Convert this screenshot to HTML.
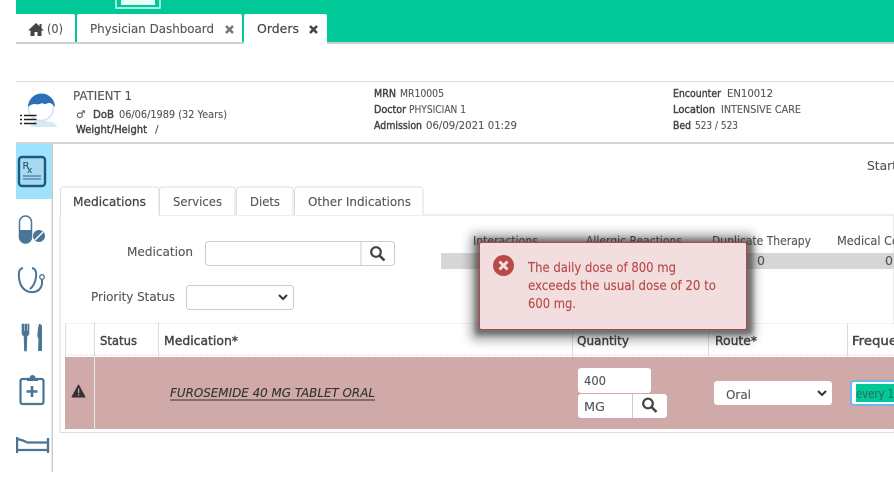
<!DOCTYPE html>
<html><head><meta charset="utf-8"><style>
html,body{margin:0;padding:0;background:#fff;width:894px;height:495px;overflow:hidden}
svg{display:block;filter:blur(.35px)}
text{font-family:"DejaVu Sans","Liberation Sans",sans-serif;font-size:12.5px;fill:#555;stroke:#555;stroke-width:.12}
.b{fill:#444;stroke:#444;stroke-width:.45}
.s{font-size:10.5px}
.h{fill:#444;stroke:#444;stroke-width:.4;font-size:12.5px}
.e{fill:#b94a48;stroke:#b94a48;stroke-width:.15;font-size:13px}
</style></head><body>
<svg width="894" height="495" viewBox="0 0 894 495" xmlns="http://www.w3.org/2000/svg">
<defs><filter id="sh" x="-20%" y="-30%" width="140%" height="160%"><feGaussianBlur stdDeviation="5"/></filter><filter id="sh2" x="-20%" y="-30%" width="140%" height="160%"><feGaussianBlur stdDeviation="2.500"/></filter></defs>
<rect width="894" height="495" fill="#fff"/>
<!-- top bar -->
<rect x="16" y="0" width="878" height="42" fill="#00c896"/>
<rect x="116" y="-3" width="44" height="11" fill="#00c896" stroke="#e8fff8" stroke-width="1.400"/>
<rect x="121" y="0" width="34" height="5" fill="#e8fff8"/>
<rect x="16" y="42" width="878" height="2" fill="#d0d0d0"/>
<!-- tabs -->
<path d="M16 14H73a2 2 0 0 1 2 2V42H16Z" fill="#fff"/>
<path d="M77 16a2 2 0 0 1 2-2H240a2 2 0 0 1 2 2V42H77Z" fill="#fff"/>
<path d="M244 16a2 2 0 0 1 2-2H325a2 2 0 0 1 2 2V42H244Z" fill="#fff"/>
<rect x="244" y="42" width="83" height="2" fill="#fff"/>
<path d="M36 23l-8 7.500h2.500V36h4v-4h3v4h4v-5.500H44l-2.500-2.300V24h-2v2.300Z" fill="#444"/>
<text x="47" y="33" textLength="16" lengthAdjust="spacingAndGlyphs">(0)</text>
<text x="90" y="33" textLength="124" lengthAdjust="spacingAndGlyphs">Physician Dashboard</text>
<path d="M226 26l7 7m0-7l-7 7" stroke="#777" stroke-width="2.600"/>
<text x="257" y="33" class="h" style="stroke-width:.15" textLength="42" lengthAdjust="spacingAndGlyphs">Orders</text>
<path d="M310 26l7 7m0-7l-7 7" stroke="#444" stroke-width="2.600"/>
<!-- patient header -->
<rect x="16" y="81" width="878" height="1" fill="#ddd"/>
<rect x="16" y="142" width="878" height="2" fill="#d4d4d4"/>
<path d="M31 127q0-5 6-6h9q10 1 11 6Z" fill="#d5e8f6"/>
<circle cx="41" cy="108" r="12.500" fill="#fff" stroke="#cfe3f3" stroke-width="1.500"/>
<path d="M28 107a13 13 0 0 1 27 0q-4-5-7-4q-3 2-6 0q-3 2-7 1q-4 0-7 3Z" fill="#2a6fb8"/>
<path d="M24 115.500h12.500M24 119.500h12.500M24 123.500h12.500M20 115.500h2M20 119.500h2M20 123.500h2" stroke="#222" stroke-width="1.600"/>
<text x="73" y="100" textLength="59" lengthAdjust="spacingAndGlyphs">PATIENT 1</text>
<text x="76" y="118" class="s">♂</text>
<text x="93" y="118" class="s b" textLength="21" lengthAdjust="spacingAndGlyphs">DoB</text>
<text x="119" y="118" class="s" textLength="108" lengthAdjust="spacingAndGlyphs">06/06/1989 (32 Years)</text>
<text x="76" y="133" class="s b" textLength="71" lengthAdjust="spacingAndGlyphs">Weight/Height</text>
<text x="155" y="133" class="s">/</text>
<text x="374" y="97" class="s b" textLength="22" lengthAdjust="spacingAndGlyphs">MRN</text>
<text x="400" y="97" class="s" textLength="44" lengthAdjust="spacingAndGlyphs">MR10005</text>
<text x="374" y="113" class="s b" textLength="32" lengthAdjust="spacingAndGlyphs">Doctor</text>
<text x="409" y="113" class="s" textLength="57" lengthAdjust="spacingAndGlyphs">PHYSICIAN 1</text>
<text x="374" y="129" class="s b" textLength="48" lengthAdjust="spacingAndGlyphs">Admission</text>
<text x="426" y="129" class="s" textLength="91" lengthAdjust="spacingAndGlyphs">06/09/2021 01:29</text>
<text x="673" y="97" class="s b" textLength="48" lengthAdjust="spacingAndGlyphs">Encounter</text>
<text x="727" y="97" class="s" textLength="46" lengthAdjust="spacingAndGlyphs">EN10012</text>
<text x="673" y="113" class="s b" textLength="42" lengthAdjust="spacingAndGlyphs">Location</text>
<text x="721" y="113" class="s" textLength="80" lengthAdjust="spacingAndGlyphs">INTENSIVE CARE</text>
<text x="673" y="129" class="s b" textLength="18" lengthAdjust="spacingAndGlyphs">Bed</text>
<text x="695" y="129" class="s" textLength="43" lengthAdjust="spacingAndGlyphs">523 / 523</text>
<text x="867" y="170" textLength="30" lengthAdjust="spacingAndGlyphs">Start</text>
<!-- sidebar -->
<rect x="16" y="144" width="36" height="55" fill="#9fe2fd"/>
<rect x="51.500" y="144" width="1.500" height="328" fill="#ccc"/>
<rect x="19" y="157" width="26" height="29" rx="3" fill="#a9d9ee" stroke="#1a5a80" stroke-width="2.400"/>
<text x="22.500" y="169" style="font-size:10px;fill:#1a5a80;stroke:#1a5a80">R</text>
<text x="27" y="173" style="font-size:9px;fill:#1a5a80;stroke:#1a5a80">x</text>
<path d="M23 176h18M23 179h18" stroke="#3f7fa8" stroke-width="1.200"/>
<!-- pill -->
<rect x="19.500" y="216" width="12" height="27" rx="6" fill="#fff" stroke="#4a7595" stroke-width="1.500"/>
<path d="M19 230h13v7a6.500 6.500 0 0 1-13 0Z" fill="#4a7595"/>
<circle cx="39" cy="236" r="6" fill="#4a7595"/>
<path d="M35 240l8-8" stroke="#fff" stroke-width="1.400"/>
<!-- stethoscope -->
<path d="M23 268q-5 1-4 9q1 13 11 15q10 1 12-8v-7M32 268q5 1 4 9q-1 8-6 12" fill="none" stroke="#4a7595" stroke-width="2"/>
<circle cx="42" cy="277" r="2.300" fill="#fff" stroke="#4a7595" stroke-width="1.300"/>
<!-- cutlery -->
<path d="M22 324v9q0 2 2 3l.5 15h2l.5-15q2-1 2-3v-9h-1.200v7h-1.100v-7h-1.400v7h-1.100v-7Z" fill="#4a7595" stroke="#4a7595" stroke-width=".6"/>
<path d="M39 324q3-.5 3 3v24h-4l.5-12q-1.500-2-1-6q.5-6 1.500-9Z" fill="#4a7595"/>
<!-- clipboard -->
<rect x="20.500" y="379" width="23" height="25" rx="2" fill="#fff" stroke="#4a7595" stroke-width="2.200"/>
<path d="M27 381v-3h2.500q.5-3 3-3t3 3H38v3Z" fill="#4a7595"/>
<path d="M32 386v11M26.500 391.500h11" stroke="#4a7595" stroke-width="2.600"/>
<!-- bed -->
<path d="M17 437v16M48 438v15" stroke="#4a7595" stroke-width="2.400"/>
<path d="M17 439q6 1 10 3.500h21M17 450h31" fill="none" stroke="#4a7595" stroke-width="2.200"/>
<!-- main tabs -->
<rect x="60" y="215" width="834" height="217.500" fill="#fff" stroke="#ddd"/>
<path d="M60.500 215V190a3 3 0 0 1 3-3H156a3 3 0 0 1 3 3V215" fill="#fff" stroke="#ddd"/>
<rect x="61" y="213" width="97.500" height="4" fill="#fff"/>
<path d="M159.500 215V190a3 3 0 0 1 3-3H232a3 3 0 0 1 3 3V215M236.500 215V190a3 3 0 0 1 3-3H290a3 3 0 0 1 3 3V215M294.500 215V190a3 3 0 0 1 3-3H420a3 3 0 0 1 3 3V215" fill="#fff" stroke="#ddd"/>
<text x="73" y="206" class="h" style="stroke-width:.25" textLength="73" lengthAdjust="spacingAndGlyphs">Medications</text>
<text x="173" y="206" textLength="49" lengthAdjust="spacingAndGlyphs">Services</text>
<text x="250" y="206" textLength="30" lengthAdjust="spacingAndGlyphs">Diets</text>
<text x="308" y="206" textLength="103" lengthAdjust="spacingAndGlyphs">Other Indications</text>
<!-- form -->
<text x="127" y="256" textLength="66" lengthAdjust="spacingAndGlyphs">Medication</text>
<rect x="205.500" y="241.500" width="189" height="24" rx="3" fill="#fff" stroke="#ccc"/>
<path d="M361 241v25" stroke="#ccc"/>
<circle cx="376" cy="252" r="4.800" fill="none" stroke="#444" stroke-width="2.200"/>
<path d="M379.500 255.500l5 5" stroke="#444" stroke-width="2.600"/>
<text x="91" y="301" textLength="84" lengthAdjust="spacingAndGlyphs">Priority Status</text>
<rect x="186.500" y="285.500" width="107" height="24" rx="3" fill="#fff" stroke="#ccc"/>
<path d="M279 295l4 4 4-4" fill="none" stroke="#333" stroke-width="2"/>
<!-- columns -->
<text x="473" y="245" textLength="65" lengthAdjust="spacingAndGlyphs">Interactions</text>
<text x="586" y="245" textLength="96" lengthAdjust="spacingAndGlyphs">Allergic Reactions</text>
<text x="712" y="245" textLength="99" lengthAdjust="spacingAndGlyphs">Duplicate Therapy</text>
<text x="837" y="245" textLength="62" lengthAdjust="spacingAndGlyphs">Medical Co</text>
<rect x="441" y="253" width="453" height="16" fill="#d6d6d6"/>
<text x="757" y="265">0</text>
<text x="885" y="265">0</text>
<!-- table -->
<rect x="65" y="323" width="829" height="34" fill="#fff"/>
<path d="M65 323.500H894" stroke="#e3e3e3" stroke-dasharray="1 1"/>
<path d="M65.500 323V430M94.500 323V430M158.500 323V357M572.500 323V357M708.500 323V357M847.500 323V357" stroke="#ddd"/>
<path d="M65 355H894" stroke="#ddd" stroke-dasharray="2 1"/>
<text x="100" y="345" class="h" textLength="37" lengthAdjust="spacingAndGlyphs">Status</text>
<text x="164" y="345" class="h" textLength="74" lengthAdjust="spacingAndGlyphs">Medication*</text>
<text x="577" y="345" class="h" textLength="52" lengthAdjust="spacingAndGlyphs">Quantity</text>
<text x="715" y="345" class="h" textLength="42" lengthAdjust="spacingAndGlyphs">Route*</text>
<text x="852" y="345" class="h" textLength="45" lengthAdjust="spacingAndGlyphs">Freque</text>
<rect x="65" y="357" width="829" height="72" fill="#cfaaa8"/>
<path d="M94.500 357V429" stroke="#dfe8ea"/>
<path d="M78.500 385l6.500 12H72Z" fill="#333" stroke="#333" stroke-linejoin="round"/>
<rect x="78" y="388.500" width="1.200" height="4.500" fill="#cfaaa8"/>
<rect x="78" y="394" width="1.200" height="1.400" fill="#cfaaa8"/>
<text x="170" y="397" style="font-style:italic;fill:#333;stroke:#333" textLength="205" lengthAdjust="spacingAndGlyphs">FUROSEMIDE 40 MG TABLET ORAL</text>
<path d="M170 400H375" stroke="#333"/>
<rect x="578" y="368" width="73" height="25" rx="3" fill="#fff"/>
<rect x="578" y="394" width="89" height="24" rx="3" fill="#fff"/>
<path d="M632.500 394v24" stroke="#ccc"/>
<text x="584" y="385" textLength="22" lengthAdjust="spacingAndGlyphs">400</text>
<text x="584" y="411" textLength="21" lengthAdjust="spacingAndGlyphs">MG</text>
<circle cx="648" cy="403.500" r="4.800" fill="none" stroke="#444" stroke-width="2.200"/>
<path d="M651.500 407l5 5" stroke="#444" stroke-width="2.600"/>
<rect x="714" y="381" width="118" height="24" rx="3" fill="#fff"/>
<text x="726" y="399" textLength="25" lengthAdjust="spacingAndGlyphs">Oral</text>
<path d="M818 391l4 4 4-4" fill="none" stroke="#333" stroke-width="2"/>
<rect x="851" y="381" width="50" height="24" rx="3" fill="#fff" stroke="#6ab8ee" stroke-width="2"/>
<rect x="856" y="384" width="40" height="18" fill="#00c896"/>
<text x="856" y="398" style="fill:#2f6f5c;stroke:#2f6f5c" textLength="38" lengthAdjust="spacingAndGlyphs">every 1</text>
<!-- modal -->
<rect x="470" y="233" width="285" height="108" rx="6" fill="#000" opacity=".3" filter="url(#sh)"/>
<rect x="475" y="239" width="278" height="96" rx="3" fill="#444" opacity=".6" filter="url(#sh2)"/>
<rect x="479.500" y="242.500" width="267" height="87" rx="2" fill="#f2dede" stroke="#b0484a"/>
<circle cx="503.500" cy="265.500" r="10.500" fill="#b94a48"/>
<path d="M499.500 261.500l8 8m0-8l-8 8" stroke="#f2dede" stroke-width="3"/>
<text x="528" y="272" class="e" textLength="148" lengthAdjust="spacingAndGlyphs">The daily dose of 800 mg</text>
<text x="528" y="290" class="e" textLength="188" lengthAdjust="spacingAndGlyphs">exceeds the usual dose of 20 to</text>
<text x="528" y="308" class="e" textLength="48" lengthAdjust="spacingAndGlyphs">600 mg.</text>
<rect x="0" y="0" width="16" height="495" fill="#fff"/>
</svg>
</body></html>
